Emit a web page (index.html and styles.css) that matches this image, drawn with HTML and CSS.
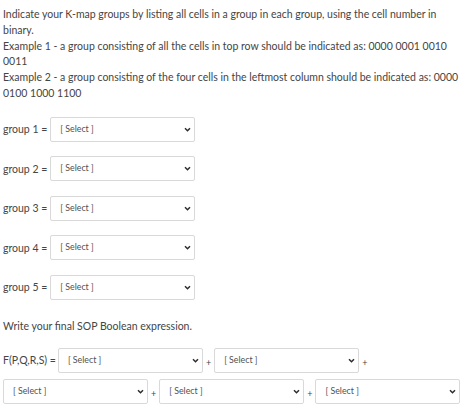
FILE: index.html
```html
<!DOCTYPE html>
<html>
<head>
<meta charset="utf-8">
<link rel="stylesheet" href="styles.css">
</head>
<body>
<div class="page">
  <div class="intro">
    <p>Indicate your K-map groups by listing all cells in a group in each group, using the cell number in binary.</p>
    <p>Example 1 - a group consisting of all the cells in top row should be indicated as: 0000 0001 0010 0011</p>
    <p>Example 2 - a group consisting of the four cells in the leftmost column should be indicated as: 0000 0100 1000 1100</p>
  </div>
  <div class="groups">
    <div class="row"><span class="label">group 1 =</span><div class="select"><span>[ Select ]</span><svg class="chev" width="7" height="5" viewBox="0 0 7 5"><path d="M1 1.2 L3.5 3.7 L6 1.2" fill="none" stroke="#2d2d2d" stroke-width="1.5"/></svg></div></div>
    <div class="row"><span class="label">group 2 =</span><div class="select"><span>[ Select ]</span><svg class="chev" width="7" height="5" viewBox="0 0 7 5"><path d="M1 1.2 L3.5 3.7 L6 1.2" fill="none" stroke="#2d2d2d" stroke-width="1.5"/></svg></div></div>
    <div class="row"><span class="label">group 3 =</span><div class="select"><span>[ Select ]</span><svg class="chev" width="7" height="5" viewBox="0 0 7 5"><path d="M1 1.2 L3.5 3.7 L6 1.2" fill="none" stroke="#2d2d2d" stroke-width="1.5"/></svg></div></div>
    <div class="row"><span class="label">group 4 =</span><div class="select"><span>[ Select ]</span><svg class="chev" width="7" height="5" viewBox="0 0 7 5"><path d="M1 1.2 L3.5 3.7 L6 1.2" fill="none" stroke="#2d2d2d" stroke-width="1.5"/></svg></div></div>
    <div class="row"><span class="label">group 5 =</span><div class="select"><span>[ Select ]</span><svg class="chev" width="7" height="5" viewBox="0 0 7 5"><path d="M1 1.2 L3.5 3.7 L6 1.2" fill="none" stroke="#2d2d2d" stroke-width="1.5"/></svg></div></div>
  </div>
  <p class="sop-title">Write your final SOP Boolean expression.</p>
  <div class="sop">
    <span class="label flabel">F(P,Q,R,S) =</span>
    <div class="select"><span>[ Select ]</span><svg class="chev" width="7" height="5" viewBox="0 0 7 5"><path d="M1 1.2 L3.5 3.7 L6 1.2" fill="none" stroke="#2d2d2d" stroke-width="1.5"/></svg></div>
    <span class="plus">+</span>
    <div class="select"><span>[ Select ]</span><svg class="chev" width="7" height="5" viewBox="0 0 7 5"><path d="M1 1.2 L3.5 3.7 L6 1.2" fill="none" stroke="#2d2d2d" stroke-width="1.5"/></svg></div>
    <span class="plus">+</span>
    <div class="select"><span>[ Select ]</span><svg class="chev" width="7" height="5" viewBox="0 0 7 5"><path d="M1 1.2 L3.5 3.7 L6 1.2" fill="none" stroke="#2d2d2d" stroke-width="1.5"/></svg></div>
    <span class="plus">+</span>
    <div class="select"><span>[ Select ]</span><svg class="chev" width="7" height="5" viewBox="0 0 7 5"><path d="M1 1.2 L3.5 3.7 L6 1.2" fill="none" stroke="#2d2d2d" stroke-width="1.5"/></svg></div>
    <span class="plus">+</span>
    <div class="select"><span>[ Select ]</span><svg class="chev" width="7" height="5" viewBox="0 0 7 5"><path d="M1 1.2 L3.5 3.7 L6 1.2" fill="none" stroke="#2d2d2d" stroke-width="1.5"/></svg></div>
  </div>
</div>
</body>
</html>
```

FILE: styles.css
```css
html, body {
  margin: 0;
  padding: 0;
  background: #ffffff;
}
.page {
  font-family: Lato, "Liberation Sans", sans-serif;
  font-size: 10.5px;
  color: #454545;
  padding: 7px 6px 0 3px;
  width: 474px;
  box-sizing: border-box;
}
.intro p {
  margin: 0;
  line-height: 15.8px;
}
.groups {
  display: flex;
  flex-direction: column;
  gap: 14.5px;
  margin-top: 15px;
}
.row {
  display: flex;
  align-items: center;
}
.label {
  margin-right: 3px;
  white-space: nowrap;
}
.select {
  width: 145px;
  height: 25px;
  box-sizing: border-box;
  border: 1px solid #d9d9d9;
  border-radius: 2px;
  background: #fff;
  display: flex;
  align-items: center;
  justify-content: space-between;
  padding: 0 3px 0 9px;
  font-size: 8.8px;
  color: #505050;
}
.select span {
  margin-top: -2px;
}
.chev {
  display: block;
}
.sop-title {
  margin: 18px 0 0 0;
  line-height: 16px;
}
.sop {
  display: flex;
  flex-wrap: wrap;
  align-items: center;
  row-gap: 6px;
  margin-top: 14px;
}
.flabel {
  margin-right: 2px;
}
.plus {
  font-size: 9px;
  margin: 5px 3px 0 3px;
}
```
